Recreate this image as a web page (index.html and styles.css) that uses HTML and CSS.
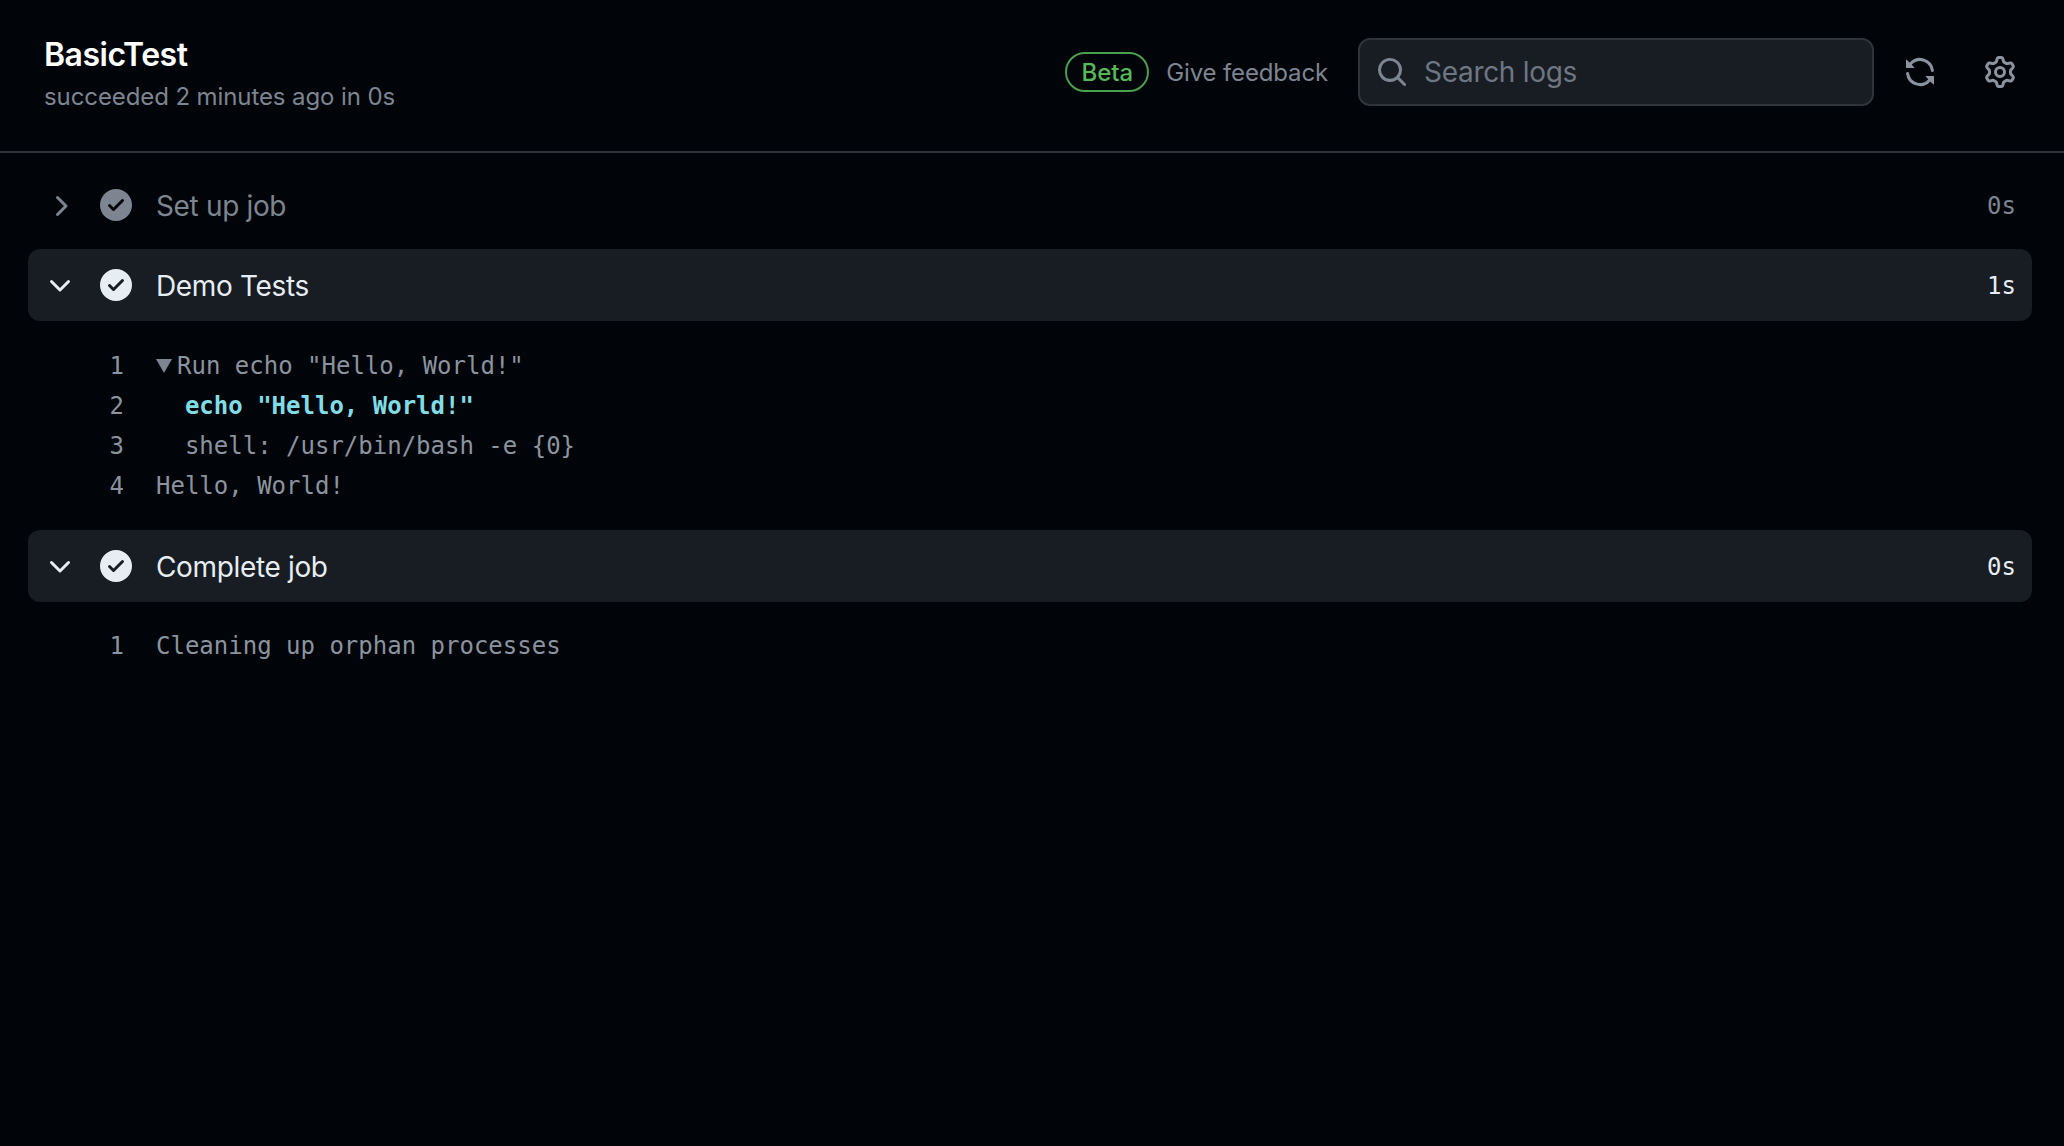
FILE: index.html
```html
<!DOCTYPE html>
<html lang="en">
<head>
<meta charset="utf-8">
<title>BasicTest</title>
<link rel="stylesheet" href="styles.css">
</head>
<body>
<svg class="defs" width="0" height="0" aria-hidden="true">
  <symbol id="i-check" viewBox="0 0 16 16"><path d="M8 16A8 8 0 1 1 8 0a8 8 0 0 1 0 16Zm3.78-9.72a.751.751 0 0 0-.018-1.042.751.751 0 0 0-1.042-.018L6.75 9.19 5.28 7.72a.751.751 0 0 0-1.042.018.751.751 0 0 0-.018 1.042l2 2a.75.75 0 0 0 1.06 0Z"/></symbol>
  <symbol id="i-right" viewBox="0 0 16 16"><path d="M6.22 3.22a.75.75 0 0 1 1.06 0l4.25 4.25a.75.75 0 0 1 0 1.06l-4.25 4.25a.751.751 0 0 1-1.042-.018.751.751 0 0 1-.018-1.042L9.94 8 6.22 4.28a.75.75 0 0 1 0-1.06Z"/></symbol>
  <symbol id="i-down" viewBox="0 0 16 16"><path d="M12.78 5.22a.749.749 0 0 1 0 1.06l-4.25 4.25a.749.749 0 0 1-1.06 0L3.22 6.28a.749.749 0 1 1 1.06-1.06L8 8.939l3.72-3.719a.749.749 0 0 1 1.06 0Z"/></symbol>
</svg>
<header class="top">
  <div class="title-block">
    <h1 class="title">BasicTest</h1>
    <p class="subtitle">succeeded 2 minutes ago in 0s</p>
  </div>
  <div class="tools">
    <span class="beta">Beta</span>
    <a class="feedback">Give feedback</a>
    <div class="search">
      <svg class="icon32" viewBox="0 0 16 16"><path d="M10.68 11.74a6 6 0 0 1-7.922-8.982 6 6 0 0 1 8.982 7.922l3.04 3.04a.749.749 0 0 1-.326 1.275.749.749 0 0 1-.734-.215ZM11.5 7a4.499 4.499 0 1 0-8.997 0A4.499 4.499 0 0 0 11.5 7Z"/></svg>
      <span class="placeholder">Search logs</span>
    </div>
    <div class="icon-buttons">
      <svg class="icon32" viewBox="0 0 16 16"><path d="M1.705 8.005a.75.75 0 0 1 .834.656 5.5 5.5 0 0 0 9.592 2.97l-1.204-1.204a.25.25 0 0 1 .177-.427h3.646a.25.25 0 0 1 .25.25v3.646a.25.25 0 0 1-.427.177l-1.38-1.38A7.002 7.002 0 0 1 1.05 8.84a.75.75 0 0 1 .656-.834ZM8 2.5a5.487 5.487 0 0 0-4.131 1.869l1.204 1.204A.25.25 0 0 1 4.896 6H1.25A.25.25 0 0 1 1 5.75V2.104a.25.25 0 0 1 .427-.177l1.38 1.38A7.002 7.002 0 0 1 14.95 7.16a.75.75 0 0 1-1.49.178A5.5 5.5 0 0 0 8 2.5Z"/></svg>
      <svg class="icon32" viewBox="0 0 16 16"><path d="M8 0a8.2 8.2 0 0 1 .701.031C9.444.095 9.99.645 10.16 1.29l.288 1.107c.018.066.079.158.212.224.231.114.454.243.668.386.123.082.233.09.299.071l1.103-.303c.644-.176 1.392.021 1.82.63.27.385.506.792.704 1.218.315.675.111 1.422-.364 1.891l-.814.806c-.049.048-.098.147-.088.294.016.257.016.515 0 .772-.01.147.038.246.088.294l.814.806c.475.469.679 1.216.364 1.891a7.977 7.977 0 0 1-.704 1.217c-.428.61-1.176.807-1.82.63l-1.102-.302c-.067-.019-.177-.011-.3.071a5.909 5.909 0 0 1-.668.386c-.133.066-.194.158-.211.224l-.29 1.106c-.168.646-.715 1.196-1.458 1.26a8.006 8.006 0 0 1-1.402 0c-.743-.064-1.289-.614-1.458-1.26l-.289-1.106c-.018-.066-.079-.158-.212-.224a5.738 5.738 0 0 1-.668-.386c-.123-.082-.233-.09-.299-.071l-1.103.303c-.644.176-1.392-.021-1.82-.63a8.12 8.12 0 0 1-.704-1.218c-.315-.675-.111-1.422.363-1.891l.815-.806c.05-.048.098-.147.088-.294a6.214 6.214 0 0 1 0-.772c.01-.147-.038-.246-.088-.294l-.815-.806C.635 6.045.431 5.298.746 4.623a7.92 7.92 0 0 1 .704-1.217c.428-.61 1.176-.807 1.82-.63l1.102.302c.067.019.177.011.3-.071.214-.143.437-.272.668-.386.133-.066.194-.158.211-.224l.29-1.106C6.009.645 6.556.095 7.299.03 7.53.01 7.764 0 8 0Zm-.571 1.525c-.036.003-.108.036-.137.146l-.289 1.105c-.147.561-.549.967-.998 1.189-.173.086-.34.183-.5.29-.417.278-.97.423-1.529.27l-1.103-.303c-.109-.03-.175.016-.195.045-.22.312-.412.644-.573.99-.014.031-.021.11.059.19l.815.806c.411.406.562.957.53 1.456a4.709 4.709 0 0 0 0 .582c.032.499-.119 1.05-.53 1.456l-.815.806c-.081.08-.073.159-.059.19.162.346.353.677.573.989.02.03.085.076.195.046l1.102-.303c.56-.153 1.113-.008 1.53.27.161.107.328.204.501.29.447.222.85.629.997 1.189l.289 1.105c.029.109.101.143.137.146a6.6 6.6 0 0 0 1.142 0c.036-.003.108-.036.137-.146l.289-1.105c.147-.561.549-.967.998-1.189.173-.086.34-.183.5-.29.417-.278.97-.423 1.529-.27l1.103.303c.109.029.175-.016.195-.045.22-.313.411-.644.573-.99.014-.031.021-.11-.059-.19l-.815-.806c-.411-.406-.562-.957-.53-1.456a4.709 4.709 0 0 0 0-.582c-.032-.499.119-1.05.53-1.456l.815-.806c.081-.08.073-.159.059-.19a6.464 6.464 0 0 0-.573-.989c-.02-.03-.085-.076-.195-.046l-1.102.303c-.56.153-1.113.008-1.53-.27a4.44 4.44 0 0 0-.501-.29c-.447-.222-.85-.629-.997-1.189l-.289-1.105c-.029-.11-.101-.143-.137-.146a6.6 6.6 0 0 0-1.142 0ZM11 8a3 3 0 1 1-6 0 3 3 0 0 1 6 0ZM9.5 8a1.5 1.5 0 1 0-3.001.001A1.5 1.5 0 0 0 9.5 8Z"/></svg>
    </div>
  </div>
</header>
<main class="steps">
  <section class="step">
    <div class="step-row">
      <svg class="icon32 chev"><use href="#i-right"/></svg>
      <svg class="icon32 status"><use href="#i-check"/></svg>
      <span class="step-name">Set up job</span>
      <span class="step-time">0s</span>
    </div>
  </section>
  <section class="step open">
    <div class="step-row">
      <svg class="icon32 chev"><use href="#i-down"/></svg>
      <svg class="icon32 status"><use href="#i-check"/></svg>
      <span class="step-name">Demo Tests</span>
      <span class="step-time">1s</span>
    </div>
    <div class="log">
      <div class="line"><span class="num">1</span><span class="txt"><svg class="tri" viewBox="0 0 16 14"><path d="M0 0h16L8 14Z"/></svg>Run echo "Hello, World!"</span></div>
      <div class="line"><span class="num">2</span><span class="txt cmd">  echo "Hello, World!"</span></div>
      <div class="line"><span class="num">3</span><span class="txt">  shell: /usr/bin/bash -e {0}</span></div>
      <div class="line"><span class="num">4</span><span class="txt">Hello, World!</span></div>
    </div>
  </section>
  <section class="step open">
    <div class="step-row">
      <svg class="icon32 chev"><use href="#i-down"/></svg>
      <svg class="icon32 status"><use href="#i-check"/></svg>
      <span class="step-name">Complete job</span>
      <span class="step-time">0s</span>
    </div>
    <div class="log tail">
      <div class="line"><span class="num">1</span><span class="txt">Cleaning up orphan processes</span></div>
    </div>
  </section>
</main>
</body>
</html>
```
FILE: styles.css
```css
* { box-sizing: border-box; }
html, body { margin: 0; padding: 0; }
body {
  background: #010409;
  color: #e6edf3;
  font-family: Inter, "Liberation Sans", sans-serif;
  width: 2064px;
  height: 1146px;
  overflow: hidden;
}
.defs { position: absolute; }
svg { fill: currentColor; flex: none; display: block; }
.icon32 { width: 32px; height: 32px; }

.top {
  height: 153px;
  border-bottom: 2px solid #2f333b;
  display: flex;
  align-items: center;
  justify-content: space-between;
  padding: 0 40px 3px 44px;
}
.title { margin: 0; font-size: 32px; line-height: 44px; font-weight: 600; color: #fff; letter-spacing: -0.5px; }
.subtitle { margin: 2px 0 0; font-size: 24px; line-height: 36px; color: #7d8590; letter-spacing: -0.1px; }
.tools { display: flex; align-items: center; color: #7d8590; margin-bottom: 4px; }
.beta {
  height: 40px;
  width: 84px;
  border: 2px solid #4a9f4f;
  border-radius: 20px;
  color: #57b85a;
  font-size: 24px;
  font-weight: 500;
  display: flex;
  align-items: center;
  justify-content: center;
  margin-right: 17px;
}
.feedback { font-size: 24px; margin-right: 30px; letter-spacing: -0.15px; }
.search {
  width: 516px;
  height: 68px;
  background: #181c23;
  border: 2px solid #30343b;
  border-radius: 12px;
  display: flex;
  align-items: center;
  gap: 16px;
  padding-left: 16px;
}
.placeholder { font-size: 28px; color: #6e7681; letter-spacing: -0.3px; }
.icon-buttons { display: flex; gap: 48px; margin-left: 30px; color: #8b949e; padding-right: 8px; }

.steps { padding: 16px 32px 0 28px; display: flex; flex-direction: column; gap: 8px; }
.step-row {
  height: 72px;
  display: flex;
  align-items: center;
  border-radius: 12px;
  padding: 0 16px 0 16px;
  color: #7d8590;
}
.step.open .step-row { background: #181c23; color: #e6edf3; }
.chev { margin: 2px 24px 0 0; }
.step-name { font-size: 28px; margin-left: 24px; flex: 1; letter-spacing: -0.35px; padding-top: 1px; }
.step-time { font-family: "DejaVu Sans Mono", monospace; font-size: 24px; padding-top: 1px; }

.log { padding: 25px 0 16px; font-family: "DejaVu Sans Mono", monospace; font-size: 24px; line-height: 40px; color: #8b949e; }
.log.tail { padding-top: 24px; }
.line { display: flex; height: 40px; }
.num { width: 96px; text-align: right; margin-right: 32px; flex: none; }
.txt { white-space: pre; display: flex; align-items: center; }
.cmd { color: #80dde6; font-weight: 700; }
.tri { width: 16px; height: 14px; margin-right: 5px; color: #7d8590; }
```
